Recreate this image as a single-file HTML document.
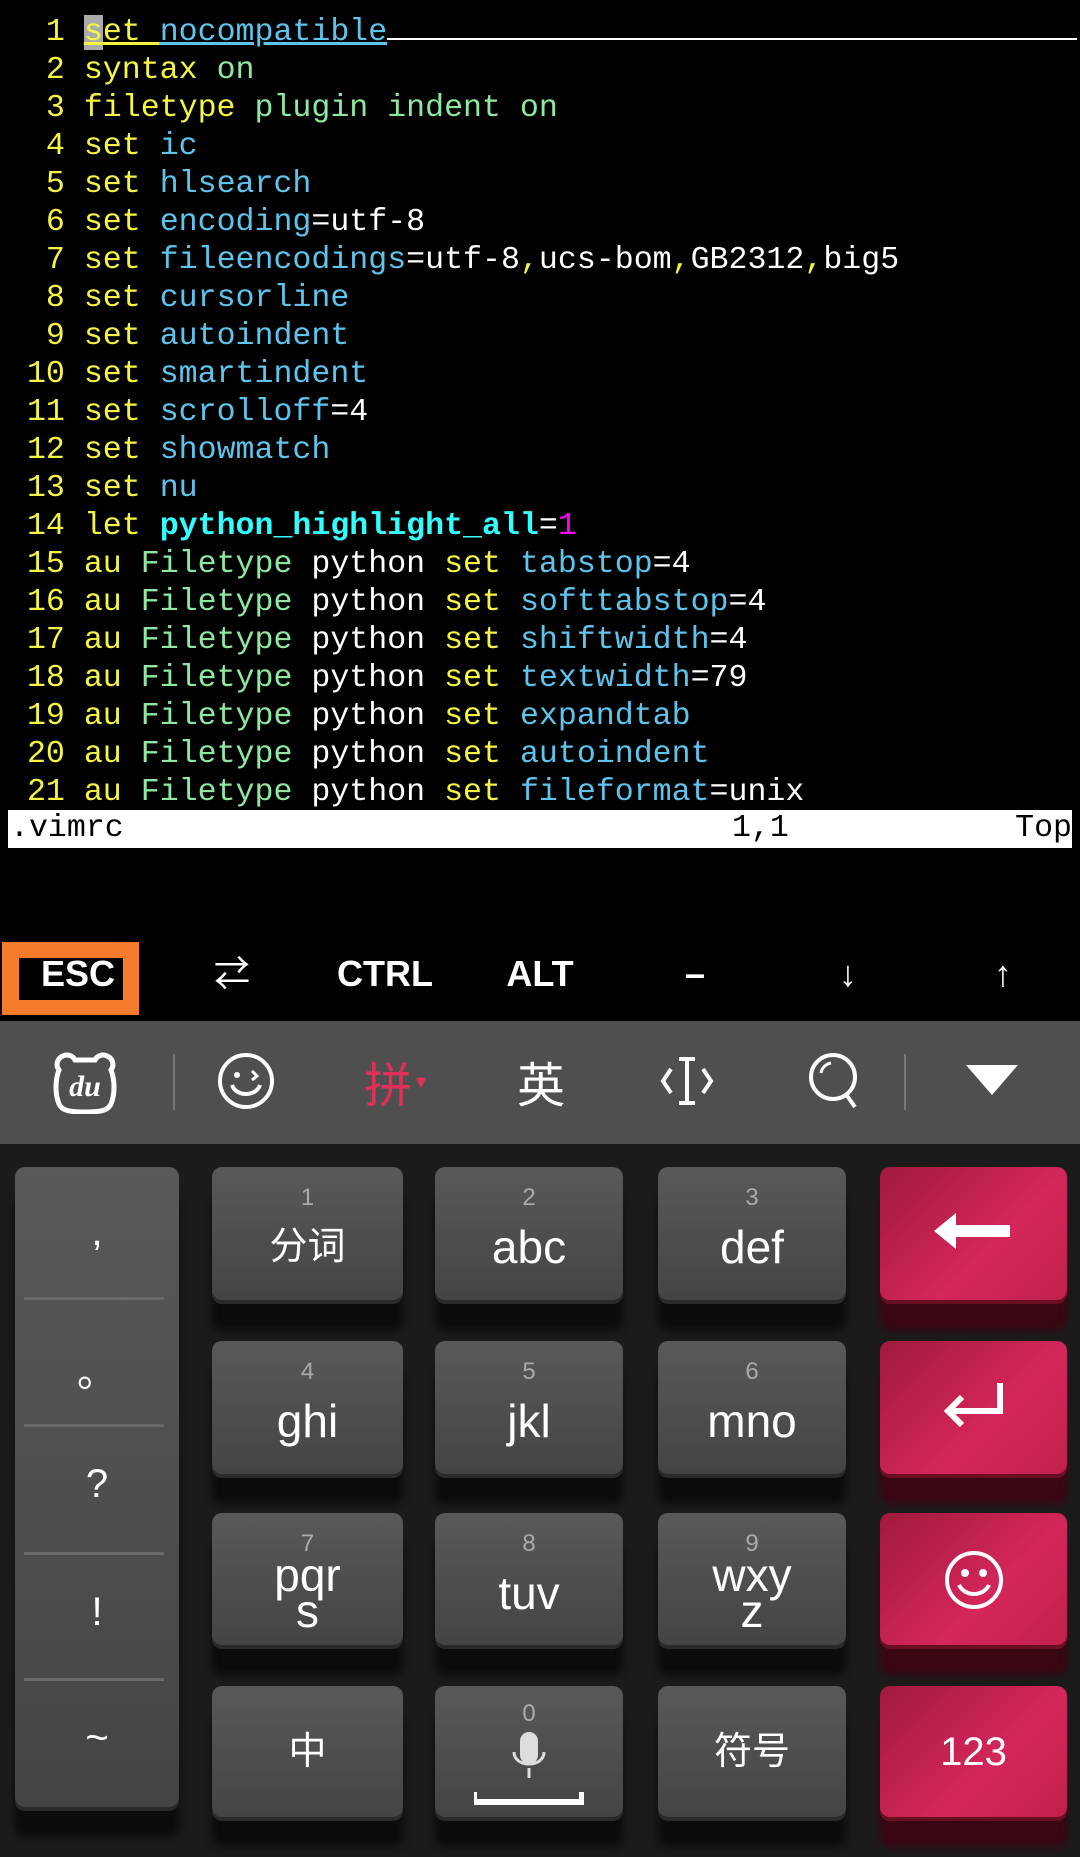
<!DOCTYPE html>
<html><head><meta charset="utf-8">
<style>
*{margin:0;padding:0;box-sizing:border-box}
body{width:1080px;height:1857px;background:#000;position:relative;overflow:hidden;font-family:"Liberation Sans","Noto Sans CJK SC",sans-serif}
.code{position:absolute;left:8px;top:14px;font-family:"Liberation Mono","DejaVu Sans Mono",monospace;font-size:31.6px;line-height:38px;white-space:pre;color:#fff}
.n{color:#f5f542}.y{color:#f5f542}.b{color:#5ec4ec}.g{color:#8ee8a0}.w{color:#fff}.c{color:#3ff;font-weight:bold}.m{color:#f0f}
.status{position:absolute;left:8px;top:810px;width:1064px;height:38px;background:#fff;color:#000;font-family:"Liberation Mono",monospace;font-size:31.6px;line-height:38px;white-space:pre}
.ek{position:absolute;top:952px;color:#fff;font-size:36px;font-weight:bold;transform:translateX(-50%);line-height:44px}
.tb{position:absolute;top:1021px;left:0;width:1080px;height:123px;background:#4f4f4f}
.kb{position:absolute;top:1144px;left:0;width:1080px;height:713px;background:#1b1b1b}
.key{position:absolute;border-radius:10px;background:linear-gradient(#595959,#444);box-shadow:0 4px 0 #2a2a2a,0 30px 8px #0c0c0c}
.red{background:linear-gradient(135deg,#a01a3c,#d4265a 60%,#c0204e);box-shadow:0 4px 0 #6a0e22,0 30px 8px #3a0612}
.num{position:absolute;width:100%;text-align:center;color:#aaa;font-size:24px}
.lab{position:absolute;width:100%;text-align:center;color:#fff;font-size:46px;line-height:44px}
.sep{position:absolute;left:24px;width:140px;height:3px;background:#6a6a6a}
.lc{position:absolute;left:15px;width:164px;text-align:center;color:#fff;font-size:40px}
.ti{position:absolute;top:1081px;transform:translate(-50%,-50%);color:#fff}
</style></head><body>
<div class="code"><span class="n">  1 </span><span class="y" style="text-decoration:underline"><span style="background:#aaa">s</span>et </span><span class="b" style="text-decoration:underline">nocompatible</span><span style="display:inline-block;width:690px;border-bottom:2px solid #fff;height:26px"></span>
<span class="n">  2 </span><span class="y">syntax </span><span class="g">on</span>
<span class="n">  3 </span><span class="y">filetype </span><span class="g">plugin indent on</span>
<span class="n">  4 </span><span class="y">set </span><span class="b">ic</span>
<span class="n">  5 </span><span class="y">set </span><span class="b">hlsearch</span>
<span class="n">  6 </span><span class="y">set </span><span class="b">encoding</span>=utf-8
<span class="n">  7 </span><span class="y">set </span><span class="b">fileencodings</span>=utf-8<span class="y">,</span>ucs-bom<span class="y">,</span>GB2312<span class="y">,</span>big5
<span class="n">  8 </span><span class="y">set </span><span class="b">cursorline</span>
<span class="n">  9 </span><span class="y">set </span><span class="b">autoindent</span>
<span class="n"> 10 </span><span class="y">set </span><span class="b">smartindent</span>
<span class="n"> 11 </span><span class="y">set </span><span class="b">scrolloff</span>=4
<span class="n"> 12 </span><span class="y">set </span><span class="b">showmatch</span>
<span class="n"> 13 </span><span class="y">set </span><span class="b">nu</span>
<span class="n"> 14 </span><span class="y">let </span><span class="c">python_highlight_all</span>=<span class="m">1</span>
<span class="n"> 15 </span><span class="y">au </span><span class="g">Filetype </span>python <span class="y">set </span><span class="b">tabstop</span>=4
<span class="n"> 16 </span><span class="y">au </span><span class="g">Filetype </span>python <span class="y">set </span><span class="b">softtabstop</span>=4
<span class="n"> 17 </span><span class="y">au </span><span class="g">Filetype </span>python <span class="y">set </span><span class="b">shiftwidth</span>=4
<span class="n"> 18 </span><span class="y">au </span><span class="g">Filetype </span>python <span class="y">set </span><span class="b">textwidth</span>=79
<span class="n"> 19 </span><span class="y">au </span><span class="g">Filetype </span>python <span class="y">set </span><span class="b">expandtab</span>
<span class="n"> 20 </span><span class="y">au </span><span class="g">Filetype </span>python <span class="y">set </span><span class="b">autoindent</span>
<span class="n"> 21 </span><span class="y">au </span><span class="g">Filetype </span>python <span class="y">set </span><span class="b">fileformat</span>=unix</div>
<div class="status"><span style="position:absolute;left:2px">.vimrc</span><span style="position:absolute;left:724px">1,1</span><span style="position:absolute;right:0">Top</span></div>

<div style="position:absolute;left:2px;top:942px;width:137px;height:73px;background:#f47a2c"></div>
<div style="position:absolute;left:19px;top:958px;width:104px;height:42px;background:#000"></div>
<div class="ek" style="left:78px">ESC</div>
<div class="ek" style="left:232px;font-weight:normal">⇄</div>
<div class="ek" style="left:385px">CTRL</div>
<div class="ek" style="left:540px">ALT</div>
<div class="ek" style="left:695px">–</div>
<div class="ek" style="left:848px;font-weight:normal">↓</div>
<div class="ek" style="left:1003px;font-weight:normal">↑</div>

<div class="tb"></div>
<svg class="ti" style="left:85px" width="72" height="66" viewBox="0 0 72 66"><path d="M14 8a9 9 0 0 1 12 4h20a9 9 0 0 1 12-4a9 9 0 0 1 4 14c4 10 4 24 0 34c-3 6-8 8-26 8s-23-2-26-8c-4-10-4-24 0-34a9 9 0 0 1 4-14z" fill="none" stroke="#fff" stroke-width="5"/><text x="36" y="48" text-anchor="middle" font-family="Liberation Serif" font-style="italic" font-weight="bold" font-size="30" fill="#fff">du</text></svg>
<div style="position:absolute;left:173px;top:1054px;width:2px;height:56px;background:#777"></div>
<div style="position:absolute;left:904px;top:1054px;width:2px;height:56px;background:#777"></div>
<svg class="ti" style="left:246px" width="60" height="60" viewBox="0 0 60 60"><circle cx="30" cy="30" r="26" fill="none" stroke="#fff" stroke-width="4"/><path d="M16 34c4 12 24 12 28 0" fill="none" stroke="#fff" stroke-width="4"/><circle cx="21" cy="24" r="3" fill="#fff"/><path d="M36 20l5 5-5 4" fill="none" stroke="#fff" stroke-width="3"/></svg>
<div class="ti" style="left:397px;color:#e0305a;font-size:48px">拼<span style="font-size:18px;vertical-align:14px">▼</span></div>
<div class="ti" style="left:541px;font-size:48px">英</div>
<svg class="ti" style="left:687px" width="56" height="60" viewBox="0 0 56 60"><path d="M12 18L4 30l8 12M44 18l8 12-8 12M28 8v44M20 8h16M20 52h16" fill="none" stroke="#fff" stroke-width="4"/></svg>
<svg class="ti" style="left:835px" width="56" height="60" viewBox="0 0 56 60"><circle cx="26" cy="26" r="22" fill="none" stroke="#fff" stroke-width="4"/><path d="M38 42l10 14" stroke="#fff" stroke-width="4"/><path d="M14 22a12 12 0 0 1 10-10" stroke="#fff" stroke-width="3" fill="none"/></svg>
<svg class="ti" style="left:992px" width="52" height="32" viewBox="0 0 52 32"><path d="M0 0h52L26 30z" fill="#fff"/></svg>

<div class="kb"></div>
<div class="key" style="left:15px;top:1167px;width:164px;height:640px"></div>
<div class="sep" style="top:1297px"></div><div class="sep" style="top:1424px"></div><div class="sep" style="top:1552px"></div><div class="sep" style="top:1678px"></div>
<div class="lc" style="top:1210px">,</div>
<div class="lc" style="top:1340px">。</div>
<div class="lc" style="top:1462px">?</div>
<div class="lc" style="top:1590px">!</div>
<div class="lc" style="top:1716px">~</div>

<div class="key" style="left:212px;top:1167px;width:191px;height:133px"><div class="num" style="top:17px">1</div><div class="lab" style="top:58px;font-size:38px">分词</div></div>
<div class="key" style="left:435px;top:1167px;width:188px;height:133px"><div class="num" style="top:17px">2</div><div class="lab" style="top:58px">abc</div></div>
<div class="key" style="left:658px;top:1167px;width:188px;height:133px"><div class="num" style="top:17px">3</div><div class="lab" style="top:58px">def</div></div>
<div class="key red" style="left:880px;top:1167px;width:187px;height:133px"><svg style="position:absolute;left:54px;top:44px" width="80" height="40" viewBox="0 0 80 40"><path d="M0 20L22 2v12h54v12H22v12z" fill="#fff"/></svg></div>

<div class="key" style="left:212px;top:1341px;width:191px;height:133px"><div class="num" style="top:17px">4</div><div class="lab" style="top:58px">ghi</div></div>
<div class="key" style="left:435px;top:1341px;width:188px;height:133px"><div class="num" style="top:17px">5</div><div class="lab" style="top:58px">jkl</div></div>
<div class="key" style="left:658px;top:1341px;width:188px;height:133px"><div class="num" style="top:17px">6</div><div class="lab" style="top:58px">mno</div></div>
<div class="key red" style="left:880px;top:1341px;width:187px;height:133px"><svg style="position:absolute;left:62px;top:40px" width="64" height="50" viewBox="0 0 64 50"><path d="M58 2v28H8M20 16L6 30l14 14" fill="none" stroke="#fff" stroke-width="6"/></svg></div>

<div class="key" style="left:212px;top:1513px;width:191px;height:132px"><div class="num" style="top:17px">7</div><div class="lab" style="top:44px;line-height:36px">pqr<br>s</div></div>
<div class="key" style="left:435px;top:1513px;width:188px;height:132px"><div class="num" style="top:17px">8</div><div class="lab" style="top:58px">tuv</div></div>
<div class="key" style="left:658px;top:1513px;width:188px;height:132px"><div class="num" style="top:17px">9</div><div class="lab" style="top:44px;line-height:36px">wxy<br>z</div></div>
<div class="key red" style="left:880px;top:1513px;width:187px;height:132px"><svg style="position:absolute;left:63px;top:36px" width="62" height="62" viewBox="0 0 62 62"><circle cx="31" cy="31" r="27" fill="none" stroke="#fff" stroke-width="4"/><circle cx="22" cy="24" r="4" fill="#fff"/><circle cx="40" cy="24" r="4" fill="#fff"/><path d="M16 36c6 12 24 12 30 0" fill="none" stroke="#fff" stroke-width="4"/></svg></div>

<div class="key" style="left:212px;top:1686px;width:191px;height:131px"><div class="lab" style="top:44px;font-size:38px">中</div></div>
<div class="key" style="left:435px;top:1686px;width:188px;height:131px"><div class="num" style="top:14px">0</div><svg style="position:absolute;left:39px;top:42px" width="110" height="80" viewBox="0 0 110 80"><rect x="46" y="4" width="18" height="32" rx="9" fill="#ddd"/><path d="M40 24c0 16 30 16 30 0M55 40v10" fill="none" stroke="#ddd" stroke-width="3"/><path d="M0 64v10h108V64" fill="none" stroke="#fff" stroke-width="6"/></svg></div>
<div class="key" style="left:658px;top:1686px;width:188px;height:131px"><div class="lab" style="top:44px;font-size:38px">符号</div></div>
<div class="key red" style="left:880px;top:1686px;width:187px;height:131px"><div class="lab" style="top:44px;font-size:40px">123</div></div>
</body></html>
